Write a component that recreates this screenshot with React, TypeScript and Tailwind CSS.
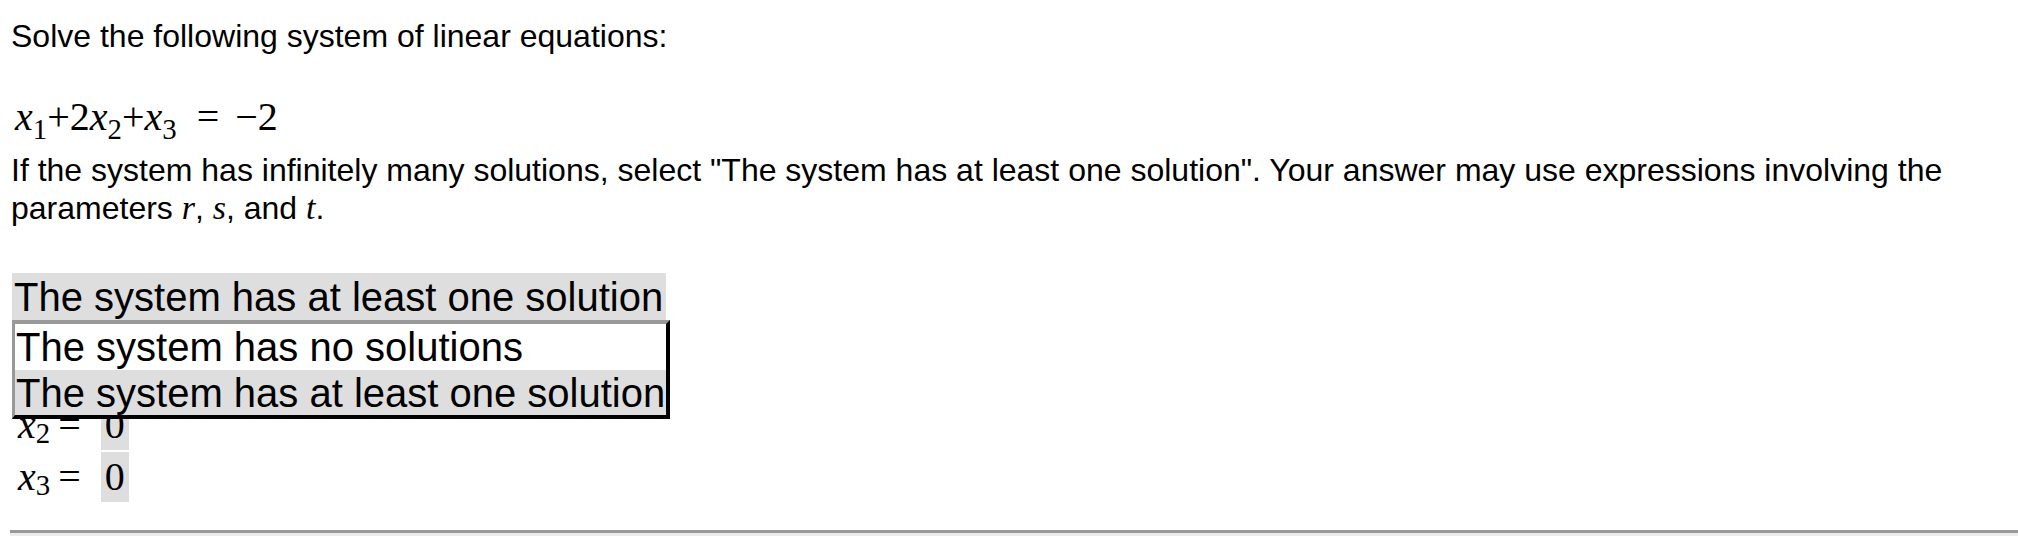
import React from 'react';

const serif = "font-['Liberation_Serif','Times_New_Roman',serif]";

function Sub({ children }: { children: React.ReactNode }) {
  return <span className="relative top-[0.3em] text-[0.72em] not-italic">{children}</span>;
}

function AnswerRow({ n }: { n: string }) {
  return (
    <div className={`flex h-[52px] items-center ${serif} text-[40px] leading-none`}>
      <span className="ml-[7px] italic">x</span>
      <Sub>{n}</Sub>
      <span className="ml-[8px]">=</span>
      <span className="ml-[20px] flex h-[50px] w-[28px] items-center justify-center bg-[#dedede]">0</span>
    </div>
  );
}

export default function App() {
  return (
    <div className="relative h-[536px] w-[2018px] overflow-hidden bg-white font-['Liberation_Sans',Arial,sans-serif] text-black">
      <div className="pl-[11px] pt-[18px]">
        <p className="text-[32px] leading-[37px]">Solve the following system of linear equations:</p>

        <div className={`mt-[44px] ml-[4px] h-[36px] ${serif} text-[40px] leading-[36px]`}>
          <span className="italic">x</span>
          <Sub>1</Sub>
          <span>+2</span>
          <span className="italic">x</span>
          <Sub>2</Sub>
          <span>+</span>
          <span className="italic">x</span>
          <Sub>3</Sub>
          <span className="ml-[20px]">=</span>
          <span className="ml-[16px]">−2</span>
        </div>

        <p className="mt-[16px] text-[32px] leading-[38px]">
          If the system has infinitely many solutions, select "The system has at least one solution". Your answer may use
          expressions involving the
          <br />
          parameters <span className={`${serif} italic text-[34px]`}>r</span>,{' '}
          <span className={`${serif} italic text-[34px]`}>s</span>, and{' '}
          <span className={`${serif} italic text-[34px]`}>t</span>.
        </p>

        <div className="mt-[46px] ml-[1px] flex h-[48px] w-[654px] items-center bg-[#dedede] pl-[2px] text-[40px] leading-none">
          The system has at least one solution
        </div>

        <div className="mt-[26px]">
          <AnswerRow n="1" />
          <AnswerRow n="2" />
          <AnswerRow n="3" />
        </div>
      </div>

      {/* open dropdown list */}
      <div className="absolute left-[12px] top-[320px] w-[658px] border-t-[4px] border-l-[3px] border-r-[4px] border-b-[4px] border-t-[#999999] border-l-[#999999] border-r-black border-b-black bg-white text-[40px] leading-none">
        <div className="flex h-[46px] items-center pl-[1px]">The system has no solutions</div>
        <div className="flex h-[45px] items-center bg-[#dedede] pl-[1px]">The system has at least one solution</div>
      </div>

      <div className="absolute bottom-0 left-[10px] right-0 h-[6px] border-t-[3px] border-[#999999] bg-[#ececec]" />
    </div>
  );
}
